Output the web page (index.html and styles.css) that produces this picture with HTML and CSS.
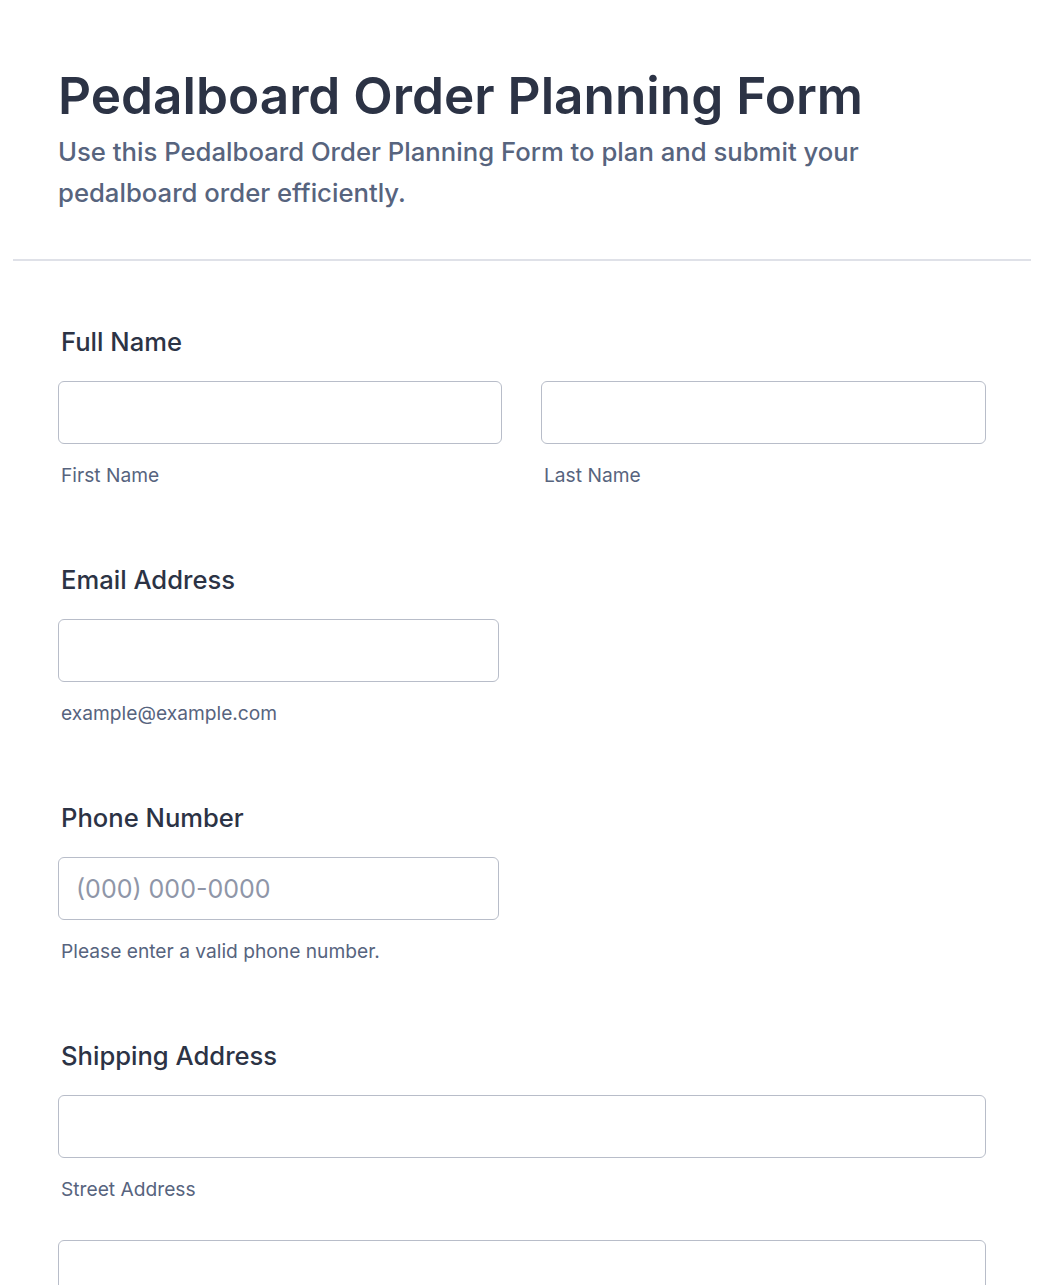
FILE: index.html
```html
<!DOCTYPE html>
<html lang="en">
<head>
<meta charset="utf-8">
<title>Pedalboard Order Planning Form</title>
<link rel="stylesheet" href="styles.css">
</head>
<body>
<div class="form">
  <header class="form-header">
    <h1 class="title">Pedalboard Order Planning Form</h1>
    <p class="subtitle">Use this Pedalboard Order Planning Form to plan and submit your pedalboard order efficiently.</p>
  </header>
  <div class="divider"></div>
  <div class="fields">
    <div class="field">
      <label class="label">Full Name</label>
      <div class="row">
        <div class="col">
          <input class="input" type="text">
          <span class="sublabel">First Name</span>
        </div>
        <div class="col">
          <input class="input" type="text">
          <span class="sublabel">Last Name</span>
        </div>
      </div>
    </div>
    <div class="field">
      <label class="label">Email Address</label>
      <div class="col half">
        <input class="input" type="email">
        <span class="sublabel">example@example.com</span>
      </div>
    </div>
    <div class="field">
      <label class="label">Phone Number</label>
      <div class="col half">
        <input class="input" type="tel" placeholder="(000) 000-0000">
        <span class="sublabel">Please enter a valid phone number.</span>
      </div>
    </div>
    <div class="field">
      <label class="label">Shipping Address</label>
      <div class="col">
        <input class="input" type="text">
        <span class="sublabel">Street Address</span>
      </div>
      <div class="col next">
        <input class="input" type="text">
      </div>
    </div>
  </div>
</div>
</body>
</html>
```
FILE: styles.css
```css
* { box-sizing: border-box; }
html, body {
  margin: 0;
  padding: 0;
  background: #ffffff;
  font-family: Inter, "Noto Sans", "Liberation Sans", sans-serif;
}
.form {
  padding: 0 13px;
}
.form-header {
  padding: 64px 45px 46px;
}
.title {
  margin: 0;
  font-size: 51.3px;
  line-height: 62px;
  font-weight: 600;
  color: #2c3345;
  letter-spacing: 0;
}
.subtitle {
  margin: 5px 0 0;
  font-size: 25.7px;
  line-height: 41px;
  font-weight: 500;
  color: #57647e;
}
.divider {
  height: 2px;
  background: #dfe1e8;
}
.fields {
  padding: 66px 45px 0;
}
.field {
  margin-bottom: 78px;
}
.label {
  display: block;
  padding-left: 3px;
  font-size: 25.6px;
  line-height: 30px;
  font-weight: 500;
  color: #2c3345;
  margin-bottom: 24px;
}
.row {
  display: grid;
  grid-template-columns: 444px 445px;
  column-gap: 39px;
}
.col {
  display: flex;
  flex-direction: column;
}
.half {
  width: 441px;
}
.next {
  margin-top: 39px;
}
.input {
  display: block;
  width: 100%;
  height: 63px;
  border: 1.5px solid #b8bdc9;
  border-radius: 6px;
  background: #fff;
  padding: 0 17px;
  font-family: inherit;
  font-size: 25px;
  color: #2c3345;
  outline: none;
}
.input::placeholder {
  color: #8f96a8;
}
.sublabel {
  display: block;
  margin-top: 19px;
  padding-left: 3px;
  font-size: 19.2px;
  line-height: 24px;
  color: #57647e;
}
```
